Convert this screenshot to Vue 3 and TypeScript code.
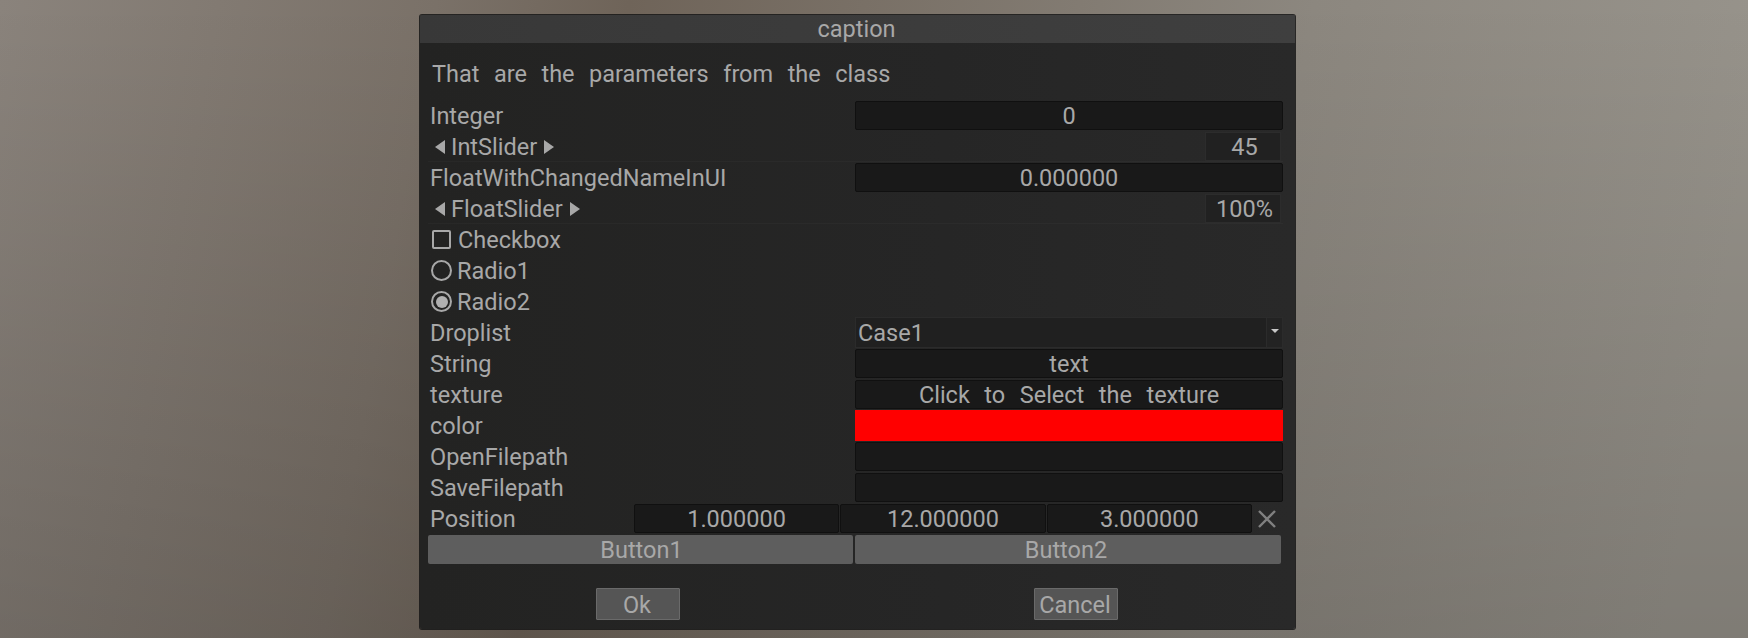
<script setup lang="ts">
interface FieldRow { label: string; value: string }
const topFields: FieldRow[] = [
  { label: 'String', value: 'text' },
  { label: 'texture', value: 'Click to Select the texture' },
]
const pathFields: FieldRow[] = [
  { label: 'OpenFilepath', value: '' },
  { label: 'SaveFilepath', value: '' },
]
const position: string[] = ['1.000000', '12.000000', '3.000000']
</script>

<template>
  <div class="page">
    <section class="dialog">
      <header class="title">caption</header>
      <p class="intro">That are the parameters from the class</p>
      <div class="rows">
        <div class="row">
          <span class="label">Integer</span>
          <div class="field">0</div>
        </div>
        <div class="row slider">
          <span class="arrow left"></span><span class="slabel">IntSlider</span><span class="arrow right"></span>
          <div class="sbox">45</div>
        </div>
        <div class="row">
          <span class="label">FloatWithChangedNameInUI</span>
          <div class="field">0.000000</div>
        </div>
        <div class="row slider">
          <span class="arrow left"></span><span class="slabel">FloatSlider</span><span class="arrow right"></span>
          <div class="sbox">100%</div>
        </div>
        <div class="row check">
          <span class="box"></span><span class="clabel">Checkbox</span>
        </div>
        <div class="row check">
          <span class="radio"></span><span class="rlabel">Radio1</span>
        </div>
        <div class="row check">
          <span class="radio on"></span><span class="rlabel">Radio2</span>
        </div>
        <div class="row">
          <span class="label">Droplist</span>
          <div class="drop"><span class="drop-text">Case1</span><span class="caret"></span></div>
        </div>
        <div v-for="f in topFields" :key="f.label" class="row">
          <span class="label">{{ f.label }}</span>
          <div class="field">{{ f.value }}</div>
        </div>
        <div class="row">
          <span class="label">color</span>
          <div class="swatch"></div>
        </div>
        <div v-for="f in pathFields" :key="f.label" class="row">
          <span class="label">{{ f.label }}</span>
          <div class="field">{{ f.value }}</div>
        </div>
        <div class="row">
          <span class="label">Position</span>
          <div class="vec">
            <div v-for="p in position" :key="p" class="field part">{{ p }}</div>
          </div>
          <svg class="close" width="18" height="18" viewBox="0 0 18 18">
            <path d="M1 1L17 17M17 1L1 17" stroke="#808080" stroke-width="2.4" fill="none" />
          </svg>
        </div>
        <div class="row buttons">
          <div class="btn first">Button1</div>
          <div class="btn second">Button2</div>
        </div>
      </div>
      <footer class="actions">
        <div class="action">Ok</div>
        <div class="action">Cancel</div>
      </footer>
    </section>
  </div>
</template>

<style>
html, body { margin: 0; padding: 0; }
</style>

<style scoped>
.page {
  width: 1748px;
  height: 638px;
  box-sizing: border-box;
  padding: 14px 0 0 419px;
  overflow: hidden;
  font-family: Roboto, "Liberation Sans", sans-serif;
  font-size: 23.5px;
  color: #a8a8a8;
  background:
    linear-gradient(to bottom, rgba(0, 0, 0, 0), rgba(0, 0, 0, 0.16)),
    linear-gradient(100deg, #8a837c 0, #7a7168 430px, #6f6459 620px, #8c877f 1295px, #97938b 1748px);
}
.dialog {
  width: 877px;
  height: 616px;
  box-sizing: border-box;
  border: 1px solid rgba(22, 22, 22, 0.85);
  border-radius: 3px;
  background: linear-gradient(90deg, #232322, #262626 60%, #292929);
  background-clip: padding-box;
}
.title {
  height: 28px;
  line-height: 29px;
  padding-right: 2px;
  text-align: center;
  background: linear-gradient(90deg, #383838, #3f3f3f);
  border-radius: 2px 2px 0 0;
}
.intro {
  margin: 0;
  height: 58px;
  line-height: 62px;
  padding-left: 12px;
  word-spacing: 8.7px;
  white-space: nowrap;
}
.rows {
  display: flex;
  flex-direction: column;
  gap: 2px;
  width: 855px;
  margin-left: 8px;
}
.row {
  height: 29px;
  display: flex;
  align-items: center;
  line-height: 30px;
  white-space: nowrap;
}
.label { padding-left: 2px; flex: 1; }
.field {
  width: 428px;
  height: 29px;
  flex: none;
  box-sizing: border-box;
  background: #191919;
  border: 1px solid #101010;
  border-radius: 2px;
  text-align: center;
  word-spacing: 8.7px;
  line-height: 28px;
}
.slider { box-shadow: 0 1px 0 rgba(255, 255, 255, 0.025); }
.slabel { margin-right: 6px; }
.arrow {
  width: 0;
  height: 0;
  border-top: 7.5px solid transparent;
  border-bottom: 7.5px solid transparent;
}
.arrow.left { margin-left: 7px; margin-right: 6px; border-right: 10px solid #a8a8a8; }
.arrow.right { border-left: 10px solid #a8a8a8; margin-right: auto; margin-left: 1px; }
.sbox {
  width: 76px;
  height: 29px;
  box-sizing: border-box;
  margin-right: 2px;
  padding-left: 3px;
  background: #212121;
  border: 1px solid #2c2c2c;
  text-align: center;
  line-height: 28px;
}
.check { padding-left: 3px; }
.box {
  width: 19px;
  height: 19px;
  box-sizing: border-box;
  margin-left: 1px;
  border: 2px solid #a8a8a8;
  border-radius: 2px;
}
.clabel { margin-left: 7px; }
.radio {
  position: relative;
  width: 21px;
  height: 21px;
  box-sizing: border-box;
  border: 2px solid #a8a8a8;
  border-radius: 50%;
}
.radio.on::after {
  content: "";
  position: absolute;
  left: 2.5px;
  top: 2.5px;
  width: 12px;
  height: 12px;
  border-radius: 50%;
  background: #b0b0b0;
}
.rlabel { margin-left: 5px; }
.drop {
  width: 428px;
  height: 31px;
  flex: none;
  box-sizing: border-box;
  display: flex;
  border: 1px solid #2b2b2b;
  background: #202020;
  line-height: 30px;
}
.drop-text { flex: 1; padding-left: 2px; border-right: 1px solid #2b2b2b; }
.caret {
  width: 15px;
  display: flex;
  align-items: center;
  justify-content: center;
  background: #232323;
}
.caret::before {
  content: "";
  margin-top: -4px;
  border-left: 4px solid transparent;
  border-right: 4px solid transparent;
  border-top: 4px solid #c8c8c8;
}
.swatch {
  width: 428px;
  height: 31px;
  flex: none;
  background: #ff0000;
}
.vec {
  display: flex;
  gap: 1px;
  flex: none;
  margin-right: 6px;
}
.part { width: 205.4px; }
.close { flex: none; margin-right: 7px; }
.buttons { gap: 2px; padding-right: 2px; }
.btn {
  flex: 1;
  height: 29px;
  box-sizing: border-box;
  background: #5e5e5e;
  border-radius: 2px;
  text-align: center;
  line-height: 30px;
}
.btn.first { flex: none; width: 425px; padding-left: 2px; }
.btn.second { padding-right: 4px; }
.actions {
  display: flex;
  gap: 354px;
  margin: 24px 0 0 176px;
}
.action {
  width: 84px;
  height: 32px;
  box-sizing: border-box;
  padding-right: 2px;
  background: #555555;
  border: 1px solid #6a6a6a;
  border-radius: 1px;
  text-align: center;
  line-height: 33px;
}
</style>
